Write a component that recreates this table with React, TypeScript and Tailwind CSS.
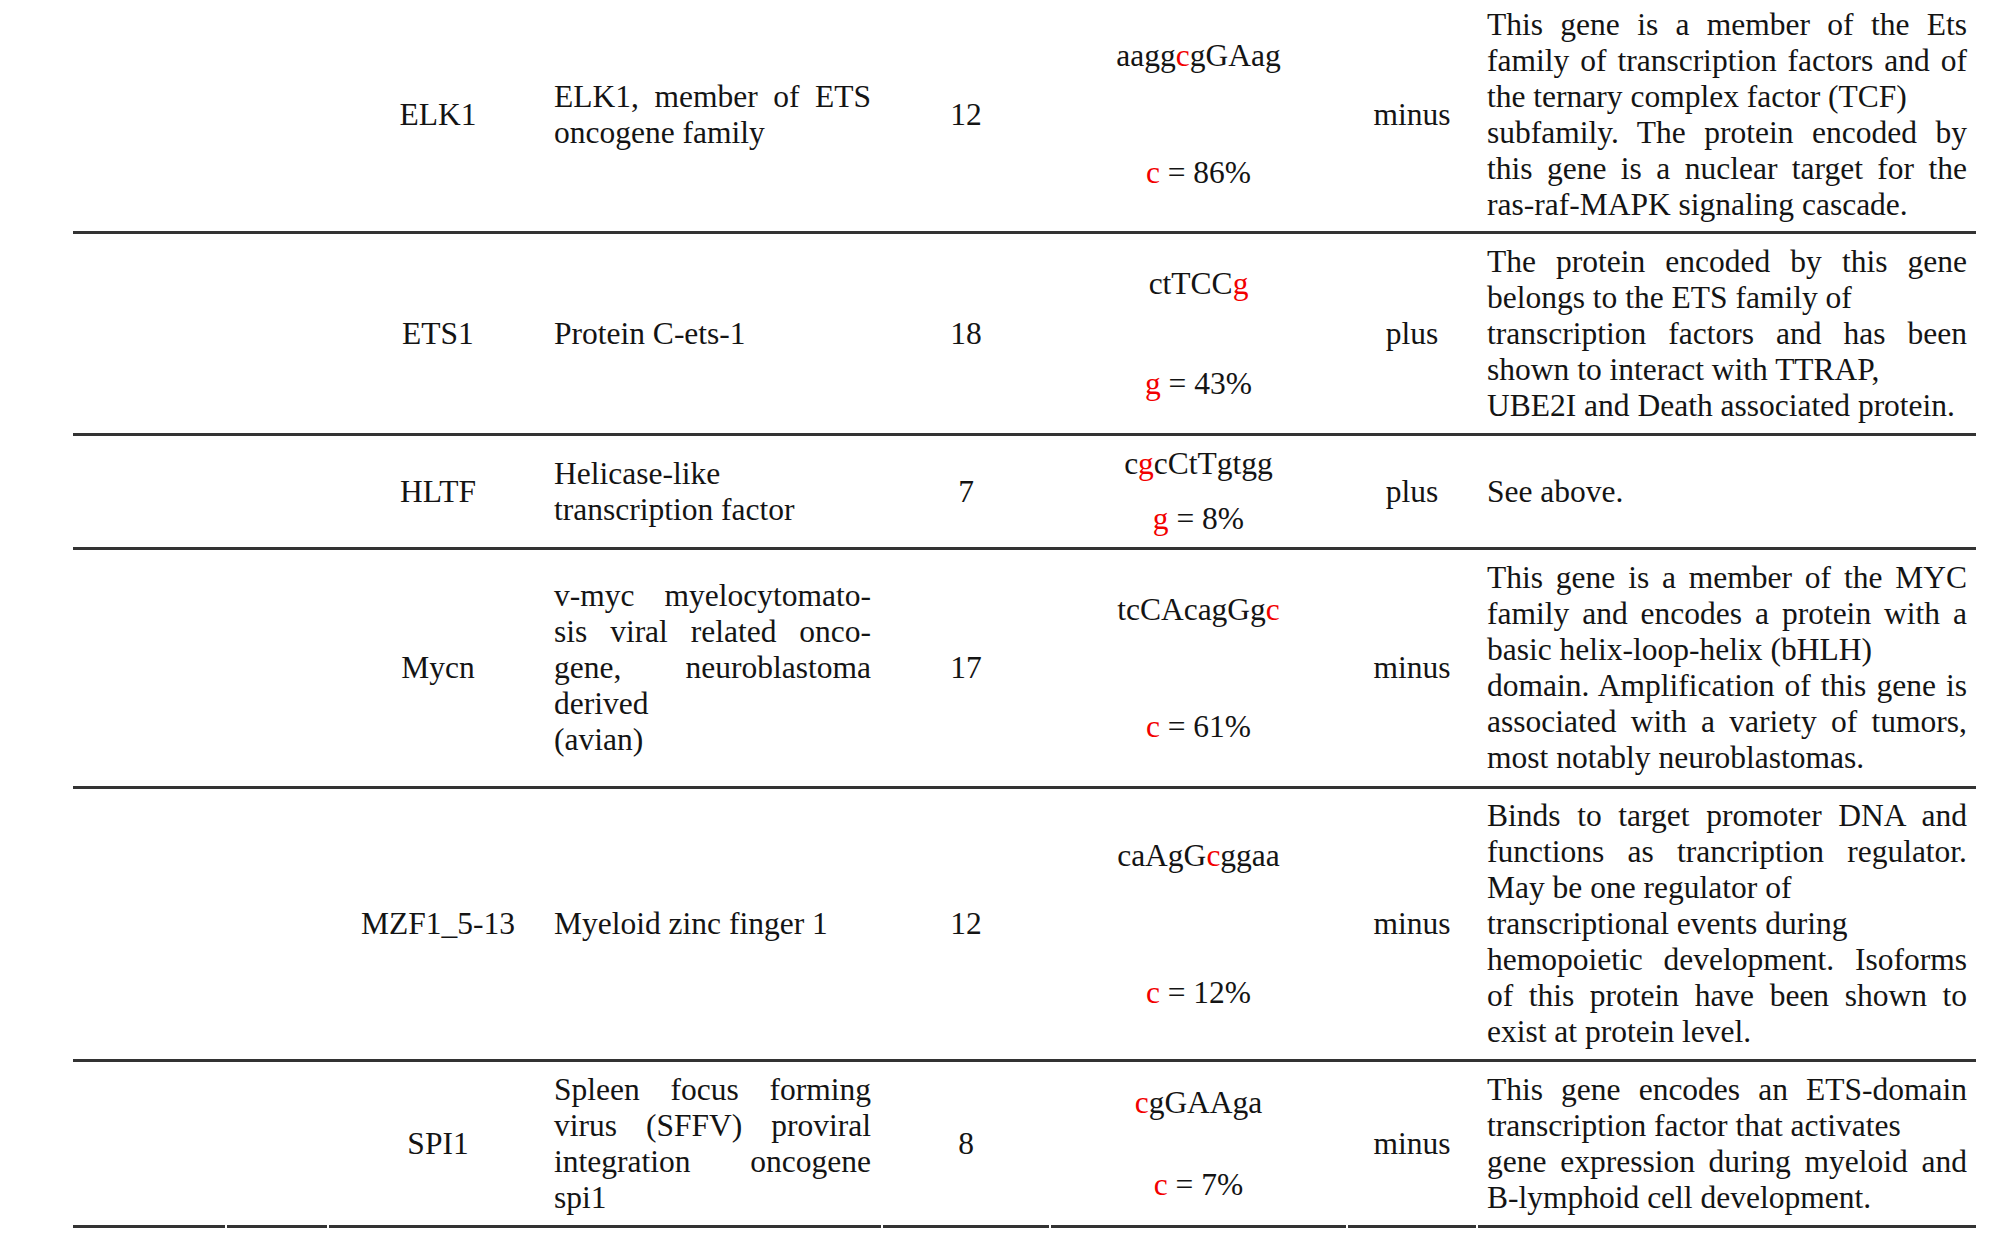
import React from "react";

const R = ({ children }: { children: React.ReactNode }) => (
  <span className="text-[#f20000]">{children}</span>
);

type Line = [string, boolean];

type Row = {
  h: string;
  top: string;
  gene: string;
  name: Line[];
  num: string;
  motif: React.ReactNode;
  pct: React.ReactNode;
  spacer: string;
  strand: string;
  text: Line[];
};

const rows: Row[] = [
  {
    h: "h-[233px]",
    top: "-mt-[2px]",
    gene: "ELK1",
    name: [
      ["ELK1, member of ETS", true],
      ["oncogene family", false],
    ],
    num: "12",
    motif: (
      <>
        aagg<R>c</R>gGAag
      </>
    ),
    pct: (
      <>
        <R>c</R> = 86%
      </>
    ),
    spacer: "h-[81px]",
    strand: "minus",
    text: [
      ["This gene is a member of the Ets", true],
      ["family of transcription factors and of", true],
      ["the ternary complex factor (TCF)", false],
      ["subfamily. The protein encoded by", true],
      ["this gene is a nuclear target for the", true],
      ["ras-raf-MAPK signaling cascade.", false],
    ],
  },
  {
    h: "h-[202px]",
    top: "border-t-[3px] border-[#333333]",
    gene: "ETS1",
    name: [["Protein C-ets-1", false]],
    num: "18",
    motif: (
      <>
        ctTCC<R>g</R>
      </>
    ),
    pct: (
      <>
        <R>g</R> = 43%
      </>
    ),
    spacer: "h-[64px]",
    strand: "plus",
    text: [
      ["The protein encoded by this gene", true],
      ["belongs to the ETS family of", false],
      ["transcription factors and has been", true],
      ["shown to interact with TTRAP,", false],
      ["UBE2I and Death associated protein.", false],
    ],
  },
  {
    h: "h-[114px]",
    top: "border-t-[3px] border-[#333333]",
    gene: "HLTF",
    name: [
      ["Helicase-like", false],
      ["transcription factor", false],
    ],
    num: "7",
    motif: (
      <>
        c<R>g</R>cCtTgtgg
      </>
    ),
    pct: (
      <>
        <R>g</R> = 8%
      </>
    ),
    spacer: "h-[19px]",
    strand: "plus",
    text: [["See above.", false]],
  },
  {
    h: "h-[239px]",
    top: "border-t-[3px] border-[#333333]",
    gene: "Mycn",
    name: [
      ["v-myc myelocytomato-", true],
      ["sis viral related onco-", true],
      ["gene, neuroblastoma", true],
      ["derived", false],
      ["(avian)", false],
    ],
    num: "17",
    motif: (
      <>
        tcCAcagGg<R>c</R>
      </>
    ),
    pct: (
      <>
        <R>c</R> = 61%
      </>
    ),
    spacer: "h-[81px]",
    strand: "minus",
    text: [
      ["This gene is a member of the MYC", true],
      ["family and encodes a protein with a", true],
      ["basic helix-loop-helix (bHLH)", false],
      ["domain. Amplification of this gene is", true],
      ["associated with a variety of tumors,", true],
      ["most notably neuroblastomas.", false],
    ],
  },
  {
    h: "h-[273px]",
    top: "border-t-[3px] border-[#333333]",
    gene: "MZF1_5-13",
    name: [["Myeloid zinc finger 1", false]],
    num: "12",
    motif: (
      <>
        caAgG<R>c</R>ggaa
      </>
    ),
    pct: (
      <>
        <R>c</R> = 12%
      </>
    ),
    spacer: "h-[101px]",
    strand: "minus",
    text: [
      ["Binds to target promoter DNA and", true],
      ["functions as trancription regulator.", true],
      ["May be one regulator of", false],
      ["transcriptional events during", false],
      ["hemopoietic development. Isoforms", true],
      ["of this protein have been shown to", true],
      ["exist at protein level.", false],
    ],
  },
  {
    h: "h-[166px]",
    top: "border-t-[3px] border-[#333333]",
    gene: "SPI1",
    name: [
      ["Spleen focus forming", true],
      ["virus (SFFV) proviral", true],
      ["integration oncogene", true],
      ["spi1", false],
    ],
    num: "8",
    motif: (
      <>
        <R>c</R>gGAAga
      </>
    ),
    pct: (
      <>
        <R>c</R> = 7%
      </>
    ),
    spacer: "h-[46px]",
    strand: "minus",
    text: [
      ["This gene encodes an ETS-domain", true],
      ["transcription factor that activates", false],
      ["gene expression during myeloid and", true],
      ["B-lymphoid cell development.", false],
    ],
  },
];

const Lines = ({ lines }: { lines: Line[] }) => (
  <div className="flex flex-col">
    {lines.map(([t, j], i) => (
      <div
        key={i}
        className={
          j
            ? "text-justify [text-align-last:justify] whitespace-nowrap"
            : "text-left whitespace-nowrap"
        }
      >
        {t}
      </div>
    ))}
  </div>
);

export default function App() {
  return (
    <div
      className="w-[2004px] h-[1251px] overflow-hidden bg-white text-[#141414] text-[31.5px] leading-[36px]"
      style={{ fontFamily: '"Liberation Serif", "Times New Roman", serif' }}
    >
      <div className="ml-[73px] w-[1903px]">
        {rows.map((r, i) => (
          <div
            key={i}
            className={`grid grid-cols-[153px_102px_220px_334px_168px_297px_130px_499px] ${r.h} ${r.top}`}
          >
            <div />
            <div />
            <div className="flex items-center justify-center">{r.gene}</div>
            <div className="flex items-center pl-[6px] pr-[11px]">
              <div className="w-full">
                <Lines lines={r.name} />
              </div>
            </div>
            <div className="flex items-center justify-center">{r.num}</div>
            <div className="flex flex-col items-center justify-center">
              <div>{r.motif}</div>
              <div className={r.spacer} />
              <div>{r.pct}</div>
            </div>
            <div className="flex items-center justify-center">{r.strand}</div>
            <div className="flex items-center pl-[10px] pr-[9px]">
              <div className="w-full">
                <Lines lines={r.text} />
              </div>
            </div>
          </div>
        ))}
        <div className="grid grid-cols-[153px_102px_554px_168px_297px_130px_499px]">
          <div className="h-[3px] mr-px bg-[#333333]" />
          <div className="h-[3px] mx-px bg-[#333333]" />
          <div className="h-[3px] mx-px bg-[#333333]" />
          <div className="h-[3px] mx-px bg-[#333333]" />
          <div className="h-[3px] mx-px bg-[#333333]" />
          <div className="h-[3px] mx-px bg-[#333333]" />
          <div className="h-[3px] ml-px bg-[#333333]" />
        </div>
      </div>
    </div>
  );
}
